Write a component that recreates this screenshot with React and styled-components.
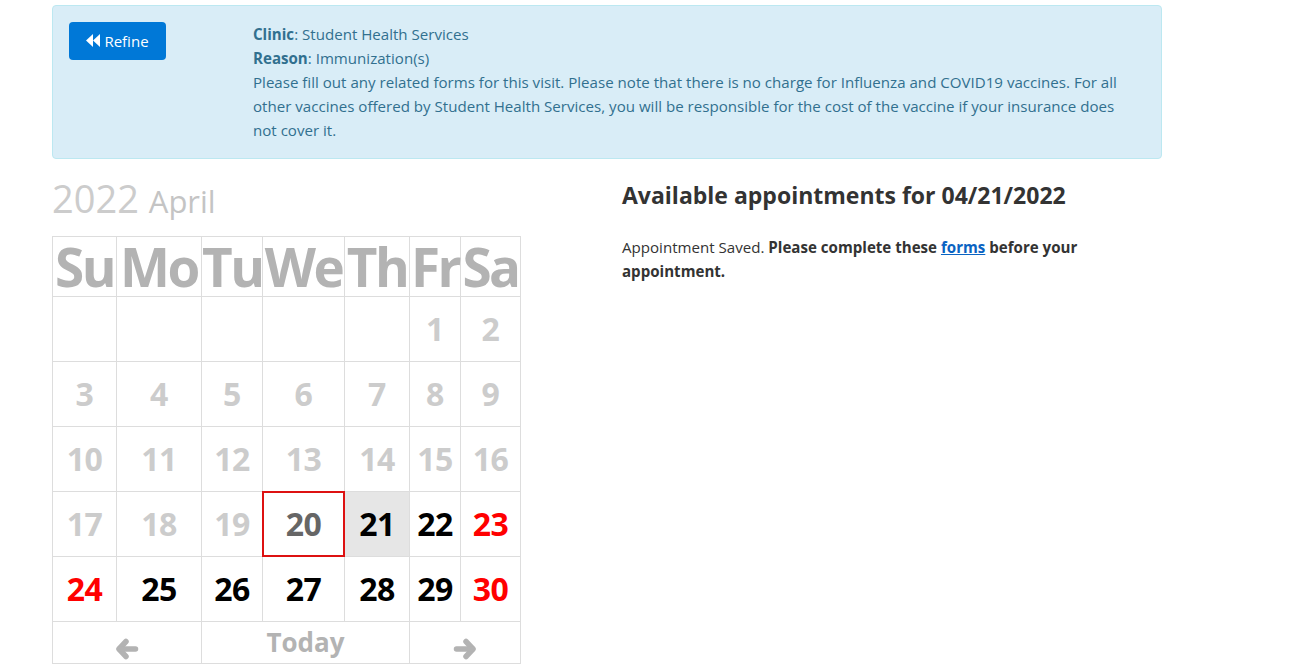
import React from "react";
import styled, { createGlobalStyle } from "styled-components";

const Global = createGlobalStyle`
  html, body { margin: 0; padding: 0; background: #fff; }
  body {
    font-family: "Open Sans", "Noto Sans", "Liberation Sans", sans-serif;
    font-size: 15px;
    line-height: 24px;
    color: #333;
  }
  * { box-sizing: border-box; }
`;

const Container = styled.div`
  width: 1110px;
  margin: 5px 0 0 52px;
`;

const Alert = styled.div`
  display: grid;
  grid-template-columns: 184px 1fr;
  background: #d9edf7;
  border: 1px solid #bce8f1;
  border-radius: 4px;
  color: #31708f;
  padding: 16px;
  font-size: 15.1px;
  line-height: 24px;
`;

const RefineButton = styled.button`
  display: inline-flex;
  align-items: center;
  gap: 4px;
  width: 97px;
  height: 38px;
  justify-content: center;
  background: #0078d7;
  color: #fff;
  border: none;
  border-radius: 4px;
  font-family: inherit;
  font-size: 15px;
  padding: 0 0 1px 0;
  margin: 0;
  cursor: pointer;
`;

const Info = styled.div`
  padding-right: 20px;
  b { font-weight: 700; }
`;

const Row = styled.div`
  display: grid;
  grid-template-columns: 570px 1fr;
`;

const CalendarCol = styled.div`
  width: 468px;
`;

const Title = styled.div`
  color: #cccccc;
  font-size: 38px;
  line-height: 40px;
  margin: 19px 0 15px 0;
  white-space: nowrap;
  span { font-size: 31px; color: #c4c4c4; }
`;

const Table = styled.table`
  border-collapse: collapse;
  table-layout: fixed;
  width: 468px;
  font-weight: 700;
`;

const Th = styled.th`
  border: 1px solid #dddddd;
  height: 59px;
  padding: 0;
  font-size: 53px;
  line-height: 59px;
  color: #b3b3b3;
  letter-spacing: -2.5px;
  text-align: center;
  white-space: nowrap;
  overflow: visible;
`;

const Td = styled.td`
  position: relative;
  border: 1px solid #dddddd;
  height: 64px;
  padding: 0;
  font-size: 32px;
  line-height: 64px;
  text-align: center;
  letter-spacing: -0.5px;
  background: ${(p) => (p.$selected ? "#e6e6e6" : "transparent")};
  color: ${(p) => p.$color};
`;

const TodayFrame = styled.span`
  position: absolute;
  inset: -1px;
  border: 2px solid #d11;
  pointer-events: none;
`;

const FootTd = styled.td`
  border: 1px solid #dddddd;
  height: 41px;
  padding: 0;
  text-align: center;
  color: #b3b3b3;
  font-size: 26px;
  line-height: 41px;
  vertical-align: ${(p) => (p.$icon ? "bottom" : "middle")};
  svg { display: block; margin: 0 auto 3px; }
`;

const RightCol = styled.div`
  padding-top: 20px;
`;

const Heading = styled.h3`
  margin: 0 0 24px 0;
  font-size: 23px;
  line-height: 32px;
  font-weight: 700;
  color: #333;
`;

const Message = styled.p`
  margin: 0;
  font-size: 15.1px;
  line-height: 24px;
  color: #333;
  width: 470px;
  b { font-weight: 700; }
  a { color: #0a63c2; font-weight: 700; text-decoration: underline; }
`;

const Backward = () => (
  <svg width="14" height="13" viewBox="0 0 14 13">
    <path d="M7 0 L0 6.5 L7 13 Z" fill="#fff" />
    <path d="M14 0 L7 6.5 L14 13 Z" fill="#fff" />
  </svg>
);

const Arrow = ({ dir }) => (
  <svg width="24" height="22" viewBox="0 0 24 22" style={dir === "right" ? { transform: "scaleX(-1)" } : undefined}>
    <g fill="none" stroke="#b3b3b3" strokeWidth="5.5" strokeLinecap="round" strokeLinejoin="round">
      <polyline points="11,3.5 4,11 11,18.5" />
      <line x1="4.5" y1="11" x2="20.5" y2="11" />
    </g>
  </svg>
);

const GRAY = "#cccccc";
const BLACK = "#000";
const RED = "#ff0000";

const weeks = [
  [null, null, null, null, null, 1, 2],
  [3, 4, 5, 6, 7, 8, 9],
  [10, 11, 12, 13, 14, 15, 16],
  [17, 18, 19, 20, 21, 22, 23],
  [24, 25, 26, 27, 28, 29, 30],
];

const colorFor = (d) => {
  if (d === 20) return "#666666";
  if (d < 20) return GRAY;
  if (d === 23 || d === 24 || d === 30) return RED;
  return BLACK;
};

const days = ["Su", "Mo", "Tu", "We", "Th", "Fr", "Sa"];
const widths = [64, 85, 61, 82, 65, 51, 60];

export default function App() {
  return (
    <>
      <Global />
      <Container>
        <Alert>
          <div>
            <RefineButton>
              <Backward />
              Refine
            </RefineButton>
          </div>
          <Info>
            <b>Clinic</b>: Student Health Services
            <br />
            <b>Reason</b>: Immunization(s)
            <br />
            Please fill out any related forms for this visit. Please note that there is no charge for Influenza and
            COVID19 vaccines. For all other vaccines offered by Student Health Services, you will be responsible for the
            cost of the vaccine if your insurance does not cover it.
          </Info>
        </Alert>
        <Row>
          <CalendarCol>
            <Title>
              2022 <span>April</span>
            </Title>
            <Table>
              <colgroup>
                {widths.map((w, i) => (
                  <col key={i} style={{ width: w }} />
                ))}
              </colgroup>
              <thead>
                <tr>
                  {days.map((d) => (
                    <Th key={d}>{d}</Th>
                  ))}
                </tr>
              </thead>
              <tbody>
                {weeks.map((w, i) => (
                  <tr key={i}>
                    {w.map((d, j) => (
                      <Td key={j} $color={d ? colorFor(d) : BLACK} $selected={d === 21}>
                        {d}
                        {d === 20 && <TodayFrame />}
                      </Td>
                    ))}
                  </tr>
                ))}
                <tr>
                  <FootTd colSpan={2} $icon>
                    <Arrow dir="left" />
                  </FootTd>
                  <FootTd colSpan={3}>Today</FootTd>
                  <FootTd colSpan={2} $icon>
                    <Arrow dir="right" />
                  </FootTd>
                </tr>
              </tbody>
            </Table>
          </CalendarCol>
          <RightCol>
            <Heading>Available appointments for 04/21/2022</Heading>
            <Message>
              Appointment Saved. <b>Please complete these <a href="#">forms</a> before your appointment.</b>
            </Message>
          </RightCol>
        </Row>
      </Container>
    </>
  );
}
